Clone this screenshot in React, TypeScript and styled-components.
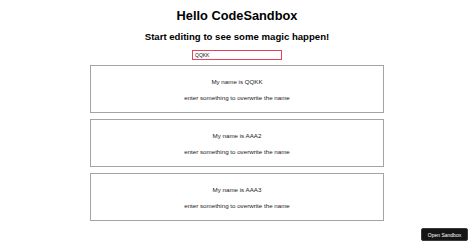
import React, { useState } from "react";
import styled, { createGlobalStyle } from "styled-components";

const GlobalStyle = createGlobalStyle`
  html, body {
    margin: 0;
    padding: 0;
    background: #ffffff;
  }
  body {
    font-family: "Liberation Sans", Arial, Helvetica, sans-serif;
    color: #111;
  }
`;

const Page = styled.div`
  display: flex;
  flex-direction: column;
  align-items: center;
  padding-top: 9px;
  text-align: center;
`;

const Title = styled.h1`
  margin: 0;
  font-size: 12.8px;
  line-height: 14px;
  font-weight: 700;
  color: #000;
`;

const Subtitle = styled.h2`
  margin: 8px 0 0;
  font-size: 9.6px;
  line-height: 11px;
  font-weight: 700;
  color: #000;
`;

const NameInput = styled.input`
  box-sizing: border-box;
  margin-top: 8px;
  width: 90px;
  height: 10px;
  padding: 0 2px;
  border: 1px solid #e2445c;
  border-radius: 0;
  outline: none;
  font-family: "Liberation Sans", Arial, sans-serif;
  font-size: 5px;
  line-height: 8px;
  color: #111;
  background: #fff;
`;

const List = styled.div`
  display: flex;
  flex-direction: column;
  gap: 6px;
  margin-top: 5px;
`;

const Card = styled.div`
  box-sizing: border-box;
  width: 294px;
  height: 48px;
  border: 1px solid #a4a4a4;
  display: flex;
  flex-direction: column;
  align-items: center;
  padding-top: 12px;
  gap: 8px;
`;

const Line = styled.p`
  margin: 0;
  font-size: 6.2px;
  line-height: 8px;
  color: #1a1a1a;
`;

const OpenButton = styled.a`
  position: fixed;
  right: 6px;
  bottom: 7px;
  box-sizing: border-box;
  width: 47px;
  height: 13px;
  display: flex;
  align-items: center;
  justify-content: center;
  background: #151515;
  border: 1px solid #3a3a3a;
  border-radius: 2px;
  color: #fff;
  font-family: "Liberation Sans", Arial, sans-serif;
  font-size: 5px;
  text-decoration: none;
`;

export default function App() {
  const [name, setName] = useState("QQKK");
  const names = [name, "AAA2", "AAA3"];
  return (
    <>
      <GlobalStyle />
      <Page>
        <Title>Hello CodeSandbox</Title>
        <Subtitle>Start editing to see some magic happen!</Subtitle>
        <NameInput value={name} onChange={(e) => setName(e.target.value)} />
        <List>
          {names.map((n, i) => (
            <Card key={i}>
              <Line>My name is {n}</Line>
              <Line>enter something to overwrite the name</Line>
            </Card>
          ))}
        </List>
      </Page>
      <OpenButton href="#">Open Sandbox</OpenButton>
    </>
  );
}
